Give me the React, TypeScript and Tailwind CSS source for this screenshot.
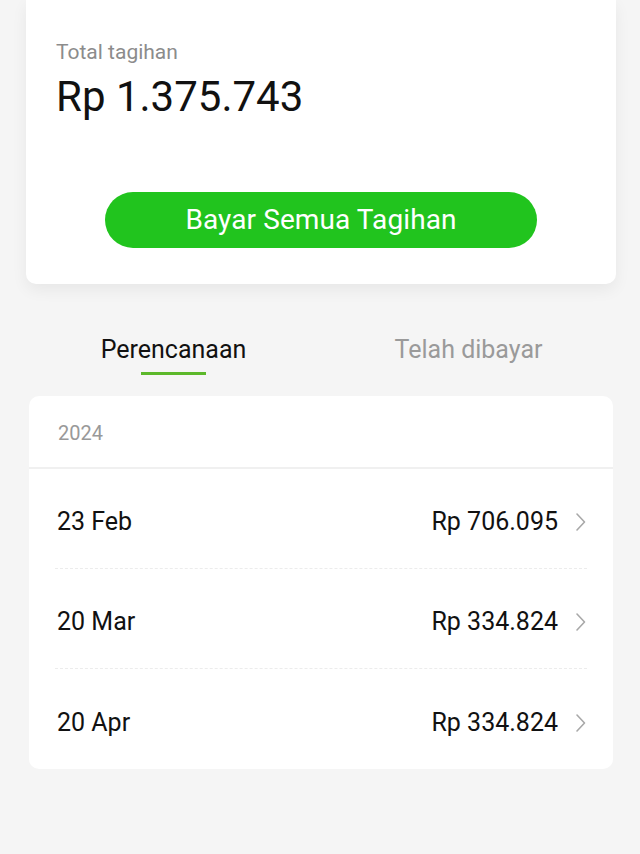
import React from "react";

const bills = [
  { date: "23 Feb", amount: "Rp 706.095" },
  { date: "20 Mar", amount: "Rp 334.824" },
  { date: "20 Apr", amount: "Rp 334.824" },
];

function Chevron() {
  return (
    <svg width="12" height="20" viewBox="0 0 12 20" fill="none">
      <path
        d="M2 2l7.5 8L2 18"
        stroke="#a8a8a8"
        strokeWidth="1.6"
        strokeLinecap="round"
        strokeLinejoin="round"
      />
    </svg>
  );
}

export default function App() {
  return (
    <div
      className="min-h-[854px] w-[640px] bg-[#f5f5f5] overflow-hidden"
      style={{ fontFamily: "Roboto, 'Noto Sans', sans-serif" }}
    >
      {/* ringkasan tagihan */}
      <div className="ml-[26px] w-[590px] bg-white rounded-b-[10px] shadow-[0_6px_16px_rgba(0,0,0,0.06)] pt-[38px] pb-[36px]">
        <div className="px-[30px]">
          <p className="text-[21px] leading-[28px] text-[#8c8c8c]">Total tagihan</p>
          <p className="mt-[6px] text-[42px] leading-[50px] text-[#111]">Rp 1.375.743</p>
        </div>
        <button className="mt-[70px] mx-auto flex items-center justify-center w-[432px] h-[56px] rounded-full bg-[#21c41e] text-white text-[28px] tracking-[0.1px]">
          Bayar Semua Tagihan
        </button>
      </div>

      {/* tab */}
      <div className="ml-[26px] w-[590px] grid grid-cols-2 mt-[49px]">
        <div className="flex flex-col items-center">
          <span className="text-[25px] leading-[34px] text-[#111]">Perencanaan</span>
          <span className="mt-[5px] w-[65px] h-[3px] bg-[#5cb82a]" />
        </div>
        <div className="flex flex-col items-center">
          <span className="text-[25px] leading-[34px] text-[#9a9a9a]">Telah dibayar</span>
        </div>
      </div>

      {/* daftar tagihan */}
      <div className="ml-[29px] w-[584px] mt-[21px] bg-white rounded-[10px]">
        <div className="h-[73px] flex items-center px-[29px] pt-[3px] border-b-2 border-[#f0f0f0]">
          <span className="text-[20px] text-[#999]">2024</span>
        </div>
        {bills.map((b, i) => (
          <div key={b.date} className="px-[26px]">
            <div
              className={
                "h-[100px] pt-[7px] flex items-center justify-between " +
                (i < bills.length - 1 ? "border-b border-dashed border-[#ececec]" : "")
              }
            >
              <span className="pl-[2px] text-[25px] text-[#111]">{b.date}</span>
              <div className="flex items-center gap-[17px]">
                <span className="text-[25px] text-[#111]">{b.amount}</span>
                <Chevron />
              </div>
            </div>
          </div>
        ))}
      </div>
    </div>
  );
}
